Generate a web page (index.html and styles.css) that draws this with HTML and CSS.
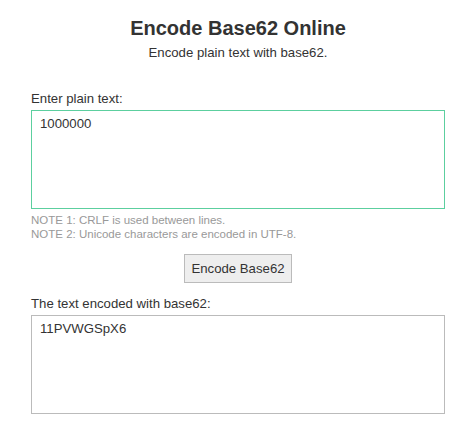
FILE: index.html
```html
<!DOCTYPE html>
<html>
<head>
<meta charset="utf-8">
<link rel="stylesheet" href="styles.css">
</head>
<body>
<div class="page">
  <h1 class="title">Encode Base62 Online</h1>
  <p class="subtitle">Encode plain text with base62.</p>
  <label class="label" for="input">Enter plain text:</label>
  <textarea id="input" class="box box-focus">1000000</textarea>
  <div class="notes">
    <div>NOTE 1: CRLF is used between lines.</div>
    <div>NOTE 2: Unicode characters are encoded in UTF-8.</div>
  </div>
  <div class="actions"><button class="btn">Encode Base62</button></div>
  <label class="label" for="output">The text encoded with base62:</label>
  <textarea id="output" class="box">11PVWGSpX6</textarea>
</div>
</body>
</html>
```
FILE: styles.css
```css
html, body {
  margin: 0;
  padding: 0;
  background: #ffffff;
}
body {
  font-family: "Liberation Sans", Arial, sans-serif;
  color: #333333;
  font-size: 13.2px;
}
.page {
  box-sizing: border-box;
  width: 416px;
  margin: 0 auto;
  padding: 17px 0 0 2px;
  display: flex;
  flex-direction: column;
}
.title {
  margin: 0;
  font-size: 20px;
  font-weight: bold;
  text-align: center;
  line-height: 23px;
  color: #333333;
}
.subtitle {
  margin: 5px 0 0 0;
  text-align: center;
  line-height: 16px;
}
.label {
  display: block;
  line-height: 16px;
  margin-top: 30px;
}
.box {
  display: block;
  box-sizing: border-box;
  width: 414px;
  height: 99px;
  margin-top: 3px;
  padding: 5px 8px;
  border: 1px solid #bbbbbb;
  font-family: "Liberation Sans", Arial, sans-serif;
  font-size: 13.2px;
  color: #333333;
  resize: none;
  outline: none;
  background: #ffffff;
}
.box-focus {
  border-color: #5ccf9f;
}
.notes {
  margin-top: 4px;
  font-size: 11.5px;
  line-height: 14px;
  color: #999999;
}
.actions {
  display: flex;
  justify-content: center;
  margin-top: 13px;
}
.btn {
  width: 108px;
  height: 29px;
  font-family: "Liberation Sans", Arial, sans-serif;
  font-size: 13.2px;
  color: #333333;
  background: #eeeeee;
  border: 1px solid #bbbbbb;
  border-radius: 0;
  padding: 0;
}
.actions + .label {
  margin-top: 13px;
}
```
